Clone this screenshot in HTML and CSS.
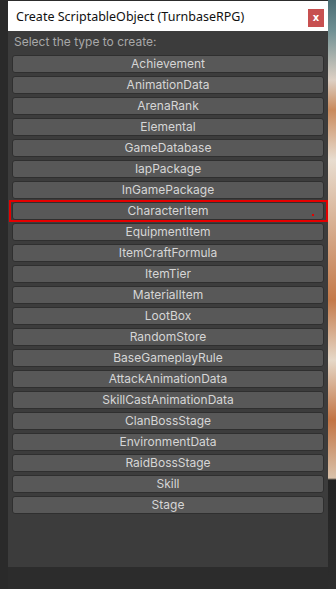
FILE: index.html
```html
<!DOCTYPE html>
<html lang="en">

<head>
  <meta charset="UTF-8">
  <meta name="viewport" content="width=device-width, initial-scale=1.0">
  <title>Create ScriptableObject</title>
  <link rel="stylesheet" href="styles.css">
</head>

<body>
  <div class="screen">
    <div class="side-left"></div>

    <div class="window">
      <div class="title-bar">
        <span class="title">Create ScriptableObject (TurnbaseRPG)</span>
        <button class="close-button">x</button>
      </div>

      <div class="window-body">
        <p class="hint">Select the type to create:</p>
        <div class="type-list">
          <button class="type-button">Achievement</button>
          <button class="type-button">AnimationData</button>
          <button class="type-button">ArenaRank</button>
          <button class="type-button">Elemental</button>
          <button class="type-button">GameDatabase</button>
          <button class="type-button">IapPackage</button>
          <button class="type-button">InGamePackage</button>
          <button class="type-button selected">CharacterItem</button>
          <button class="type-button">EquipmentItem</button>
          <button class="type-button">ItemCraftFormula</button>
          <button class="type-button">ItemTier</button>
          <button class="type-button">MaterialItem</button>
          <button class="type-button">LootBox</button>
          <button class="type-button">RandomStore</button>
          <button class="type-button">BaseGameplayRule</button>
          <button class="type-button">AttackAnimationData</button>
          <button class="type-button">SkillCastAnimationData</button>
          <button class="type-button">ClanBossStage</button>
          <button class="type-button">EnvironmentData</button>
          <button class="type-button">RaidBossStage</button>
          <button class="type-button">Skill</button>
          <button class="type-button">Stage</button>
        </div>
      </div>
    </div>

    <div class="side-right"></div>
  </div>
</body>

</html>
```

FILE: styles.css
```css
body {
  margin: 0;
  padding: 0;
  background-color: #2c2c2c;
  font-family: Inter, "Noto Sans", sans-serif;
}

.screen {
  display: flex;
  height: 589px;
  overflow: hidden;
}

.side-left {
  width: 8px;
  background-color: #2a2a2a;
}

.side-right {
  width: 8px;
  background: linear-gradient(#4a6d74 0, #6e8f92 30px, #ddd0c4 80px, #c98a5c 110px, #e8ddd0 160px,
      #c47a4a 300px, #e6d8c8 360px, #c27444 420px, #d9c2ab 478px, #232323 480px, #2d2d2d 100%);
}

.window {
  width: 320px;
  margin-top: 1px;
  height: 566px;
  display: flex;
  flex-direction: column;
}

.title-bar {
  height: 30px;
  background-color: #fff;
  display: flex;
  align-items: center;
  justify-content: space-between;
  padding: 0 4px 0 8px;
}

.title {
  font-family: "Noto Sans", sans-serif;
  font-size: 12.5px;
  color: #111;
}

.close-button {
  width: 16px;
  height: 18px;
  margin-top: 4px;
  padding: 0;
  border: none;
  background-color: #c75050;
  color: #fff;
  font-family: "DejaVu Sans", sans-serif;
  font-size: 10px;
  font-weight: bold;
  line-height: 16px;
}

.window-body {
  flex: 1;
  background-color: #3c3c3c;
  padding: 3px 4px 0 4px;
}

.hint {
  margin: 0 0 6px 2px;
  font-size: 12px;
  line-height: 15px;
  color: #a8a8a8;
}

.type-list {
  display: flex;
  flex-direction: column;
  gap: 3px;
}

.type-button {
  position: relative;
  height: 18px;
  padding: 0;
  background-color: #585858;
  border: 1px solid #2f2f2f;
  border-radius: 3px;
  color: #d6d6d6;
  font-family: Inter, "Noto Sans", sans-serif;
  font-size: 12px;
  line-height: 16px;
  text-align: center;
}

/* red highlight frame drawn over the row */
.type-button.selected::after {
  content: "";
  position: absolute;
  left: -4px;
  right: -5px;
  top: -3px;
  bottom: -3px;
  border: 2px solid #e50000;
}

.type-button.selected::before {
  content: "";
  position: absolute;
  right: 9px;
  bottom: 3px;
  width: 2px;
  height: 2px;
  background-color: #e50000;
}
```
